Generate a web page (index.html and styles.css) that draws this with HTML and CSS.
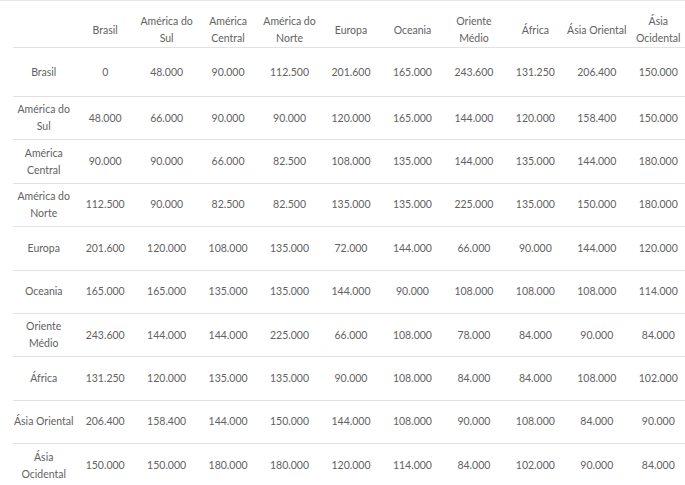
FILE: index.html
```html
<!DOCTYPE html>
<html lang="pt">
<head>
<meta charset="utf-8">
<title>Tabela de preços</title>
<link rel="stylesheet" href="styles.css">
</head>
<body>
<div class="wrap">
<table class="grid">
<thead>
<tr class="head">
<th></th><th>Brasil</th><th>América do Sul</th><th>América Central</th><th>América do Norte</th><th>Europa</th><th>Oceania</th><th>Oriente Médio</th><th>África</th><th>Ásia Oriental</th><th>Ásia Ocidental</th>
</tr>
</thead>
<tbody>
<tr class="first"><td>Brasil</td><td>0</td><td>48.000</td><td>90.000</td><td>112.500</td><td>201.600</td><td>165.000</td><td>243.600</td><td>131.250</td><td>206.400</td><td>150.000</td></tr>
<tr><td>América do Sul</td><td>48.000</td><td>66.000</td><td>90.000</td><td>90.000</td><td>120.000</td><td>165.000</td><td>144.000</td><td>120.000</td><td>158.400</td><td>150.000</td></tr>
<tr><td>América Central</td><td>90.000</td><td>90.000</td><td>66.000</td><td>82.500</td><td>108.000</td><td>135.000</td><td>144.000</td><td>135.000</td><td>144.000</td><td>180.000</td></tr>
<tr><td>América do Norte</td><td>112.500</td><td>90.000</td><td>82.500</td><td>82.500</td><td>135.000</td><td>135.000</td><td>225.000</td><td>135.000</td><td>150.000</td><td>180.000</td></tr>
<tr><td>Europa</td><td>201.600</td><td>120.000</td><td>108.000</td><td>135.000</td><td>72.000</td><td>144.000</td><td>66.000</td><td>90.000</td><td>144.000</td><td>120.000</td></tr>
<tr><td>Oceania</td><td>165.000</td><td>165.000</td><td>135.000</td><td>135.000</td><td>144.000</td><td>90.000</td><td>108.000</td><td>108.000</td><td>108.000</td><td>114.000</td></tr>
<tr><td>Oriente Médio</td><td>243.600</td><td>144.000</td><td>144.000</td><td>225.000</td><td>66.000</td><td>108.000</td><td>78.000</td><td>84.000</td><td>90.000</td><td>84.000</td></tr>
<tr><td>África</td><td>131.250</td><td>120.000</td><td>135.000</td><td>135.000</td><td>90.000</td><td>108.000</td><td>84.000</td><td>84.000</td><td>108.000</td><td>102.000</td></tr>
<tr><td>Ásia Oriental</td><td>206.400</td><td>158.400</td><td>144.000</td><td>150.000</td><td>144.000</td><td>108.000</td><td>90.000</td><td>108.000</td><td>84.000</td><td>90.000</td></tr>
<tr class="last"><td>Ásia Ocidental</td><td>150.000</td><td>150.000</td><td>180.000</td><td>180.000</td><td>120.000</td><td>114.000</td><td>84.000</td><td>102.000</td><td>90.000</td><td>84.000</td></tr>
</tbody>
</table>
</div>
</body>
</html>
```
FILE: styles.css
```css
html, body {
  margin: 0;
  padding: 0;
  overflow: hidden;
  background: #ffffff;
}
.wrap {
  border-top: 1px solid #e6e6e6;
  padding-left: 13px;
  width: 685px;
  box-sizing: border-box;
}
.grid {
  width: 676px;
  table-layout: fixed;
  border-collapse: separate;
  border-spacing: 0;
  font-family: Lato, "Liberation Sans", sans-serif;
  font-size: 10.5px;
  line-height: 17px;
  color: #626262;
}
.grid th,
.grid td {
  box-sizing: border-box;
  padding: 0;
  text-align: center;
  vertical-align: middle;
  font-weight: normal;
  border-bottom: 1px solid #e2e2e2;
}
.head th {
  height: 47px;
  padding-top: 12px;
}
.grid tbody td {
  height: 43.4px;
}
.grid tbody .first td {
  height: 49px;
}
.grid tbody .last td {
  border-bottom: none;
}
```
